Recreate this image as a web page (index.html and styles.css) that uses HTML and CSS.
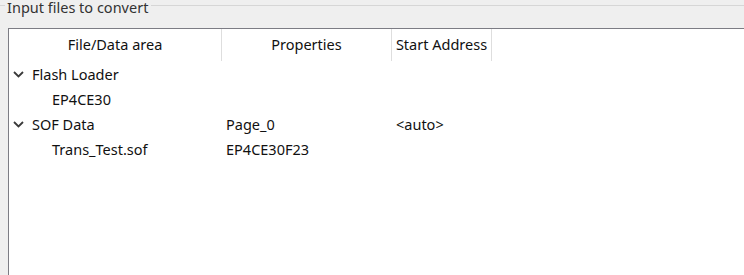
FILE: index.html
```html
<!DOCTYPE html>
<html lang="en-US">
  <head>
    <title>Input files to convert</title>
    <meta charset="utf-8" />
    <link rel="stylesheet" href="styles.css">
  </head>
  <body>
    <div class="group">
      <div class="group-title">
        <span class="rule rule-short"></span>
        <span class="title-text">Input files to convert</span>
        <span class="rule rule-long"></span>
      </div>
      <div class="view">
        <div class="row header">
          <div class="cell">File/Data area</div>
          <div class="cell">Properties</div>
          <div class="cell">Start Address</div>
          <div class="cell filler"></div>
        </div>

        <div class="row">
          <div class="cell name">
            <svg class="chevron" width="11" height="7" viewBox="0 0 11 7">
              <polyline points="1,1 5.5,5.5 10,1" />
            </svg>
            Flash Loader
          </div>
          <div class="cell"></div>
          <div class="cell"></div>
        </div>
        <div class="row">
          <div class="cell name child">EP4CE30</div>
          <div class="cell"></div>
          <div class="cell"></div>
        </div>
        <div class="row">
          <div class="cell name">
            <svg class="chevron" width="11" height="7" viewBox="0 0 11 7">
              <polyline points="1,1 5.5,5.5 10,1" />
            </svg>
            SOF Data
          </div>
          <div class="cell">Page_0</div>
          <div class="cell">&lt;auto&gt;</div>
        </div>
        <div class="row">
          <div class="cell name child">Trans_Test.sof</div>
          <div class="cell">EP4CE30F23</div>
          <div class="cell"></div>
        </div>
      </div>
    </div>
  </body>
</html>
```

FILE: styles.css
```css
* {
  box-sizing: border-box;
}
html,
body {
  height: 100%;
}
body {
  margin: 0;
  background-color: #efefef;
  color: #111;
  font: 14.5px / 1 "Noto Sans", "Open Sans", sans-serif;
  overflow: hidden;
}

.group {
  display: flex;
  flex-direction: column;
  height: 100%;
}
.group-title {
  display: flex;
  height: 17px;
  color: #333;
}
.rule {
  height: 1px;
  margin-top: 5px;
  background-color: #d6d6d6;
}
.rule-short {
  width: 5px;
}
.rule-long {
  flex: 1;
  margin-left: 3px;
}
.title-text {
  padding-left: 2px;
  line-height: 15px;
}

.view {
  flex: 1;
  margin: 11px 0 0 8px;
  background-color: #fff;
  border-left: 1px solid #7c7c84;
  border-top: 1px solid #7c7c84;
}

.row {
  display: grid;
  grid-template-columns: 213px 170px 100px 1fr;
  height: 25px;
  align-items: center;
}
.row .cell {
  padding-left: 4px;
  padding-top: 1px;
}

.header {
  height: 32px;
  align-items: stretch;
}
.header .cell {
  display: flex;
  align-items: center;
  justify-content: center;
  padding: 0 0 1px;
  border-right: 1px solid #dedede;
}
.header .filler {
  border-right: none;
}

.row .name {
  display: flex;
  align-items: center;
  padding-left: 4px;
}
.row .child {
  padding-left: 43px;
}
.chevron {
  margin-right: 8px;
  fill: none;
  stroke: #3a3a3a;
  stroke-width: 1.8;
}
```
